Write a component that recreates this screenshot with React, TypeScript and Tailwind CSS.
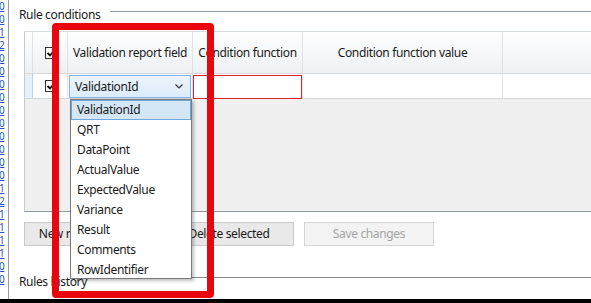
import React from "react";

const stripDigits = ["0", "0", "1", "2", "0", "0", "0", "0", "0", "0", "0", "0", "0", "0", "1", "2", "1", "1", "1", "1", "0", "0"];

const fields = [
  "ValidationId",
  "QRT",
  "DataPoint",
  "ActualValue",
  "ExpectedValue",
  "Variance",
  "Result",
  "Comments",
  "RowIdentifier",
];

function CheckBox() {
  return (
    <svg width="12" height="12" viewBox="0 0 12 12" className="block">
      <rect x="0.5" y="0.5" width="11" height="11" fill="#fff" stroke="#333" />
      <path d="M2.5 6 L5 8.5 L9.5 3" fill="none" stroke="#111" strokeWidth="1.8" />
    </svg>
  );
}

export default function App() {
  return (
    <div className="w-[591px] h-[303px] relative overflow-hidden bg-white flex flex-col text-[12px] tracking-[-0.35px] text-[#1a1a1a] font-['Segoe_UI','Noto_Sans',sans-serif]">
      <div className="flex flex-1 min-h-0">
        {/* clipped grid of the window behind */}
        <div className="w-[9px] border-r border-[#9a9a9a] overflow-hidden flex flex-col">
          {stripDigits.map((d, i) => (
            <span key={i} className="block h-[13px] leading-[12px] text-[10px] text-[#2455c3] underline -ml-[1px] overflow-hidden">
              {d}
            </span>
          ))}
        </div>

        <div className="flex-1 flex flex-col">
          {/* Rule conditions group header */}
          <div className="flex items-start pl-[10px] pt-[7px] h-[31px]">
            <span className="leading-[16px]">Rule conditions</span>
            <div className="flex-1 ml-[10px] mt-[4px] border-t border-[#8e9aa6]" />
          </div>

          {/* data grid */}
          <div className="ml-[15px] h-[181px] flex flex-col border-l border-t border-b border-l-[#c5cbd1] border-t-[#d8dde2] border-b-[#8d99a7] bg-[#f0f0f0]">
            <div className="flex h-[42px] bg-gradient-to-b from-white to-[#eef0f3] border-b border-[#d5d8db]">
              <div className="w-[8px] border-r border-[#dfe2e5]" />
              <div className="w-[35px] border-r border-[#dfe2e5] flex items-center justify-center pl-[1px]">
                <CheckBox />
              </div>
              <div className="w-[125px] border-r border-[#dfe2e5] flex items-center justify-center">Validation report field</div>
              <div className="w-[110px] border-r border-[#dfe2e5] flex items-center justify-center">Condition function</div>
              <div className="w-[200px] border-r border-[#dfe2e5] flex items-center justify-center">Condition function value</div>
              <div className="flex-1" />
            </div>
            <div className="flex h-[25px] bg-white border-b border-[#d5d8db]">
              <div className="w-[8px] border-r border-[#b9d3ea] bg-[#e6f0fa]" />
              <div className="w-[35px] border-r border-[#e4e4e4] flex items-center justify-center pl-[2px]">
                <CheckBox />
              </div>
              <div className="w-[125px] border-r border-[#e4e4e4] pl-[1px] pt-[1px]">
                <div className="w-[122px] h-[23px] border border-[#7eb4ea] bg-gradient-to-b from-[#ecf4fc] to-[#dcecfc] flex items-center justify-between pl-[5px] pr-[7px]">
                  <span>ValidationId</span>
                  <svg width="8" height="5" viewBox="0 0 8 5">
                    <path d="M0.5 0.5 L4 4 L7.5 0.5" fill="none" stroke="#333" strokeWidth="1.2" />
                  </svg>
                </div>
              </div>
              <div className="w-[110px] border-r border-[#e4e4e4] pt-[1px]">
                <div className="w-[109px] h-[24px] border border-[#e0202a] bg-white" />
              </div>
              <div className="w-[200px] border-r border-[#e4e4e4]" />
              <div className="flex-1" />
            </div>
          </div>

          {/* buttons */}
          <div className="flex gap-[10px] ml-[15px] mt-[10px]">
            <button className="w-[130px] h-[24px] border border-[#c9c9c9] bg-[#e9e9e9]">New rule condition</button>
            <button className="w-[130px] h-[24px] border border-[#c9c9c9] bg-[#e9e9e9]">Delete selected</button>
            <button className="w-[130px] h-[24px] border border-[#d6d6d6] bg-[#f3f3f3] text-[#a3a3a3]">Save changes</button>
          </div>

          {/* Rules history group header */}
          <div className="flex items-start pl-[10px] mt-[31px]">
            <span className="leading-[16px] mt-[-3px]">Rules history</span>
            <div className="flex-1 ml-[4px] border-t border-[#8a8a8a]" />
          </div>
        </div>
      </div>
      <div className="h-[4px] bg-black" />

      {/* open combo list */}
      <div className="absolute left-[70px] top-[99px] w-[122px] h-[180px] bg-white border border-[#7a7a7a] shadow-[2px_2px_3px_rgba(0,0,0,0.25)] flex flex-col">
        {fields.map((f, i) => (
          <div
            key={f}
            className={
              i === 0
                ? "h-[20px] leading-[18px] pl-[5px] bg-[#d3e7f7] border border-[#6fa9dc]"
                : "h-[20px] leading-[20px] pl-[6px]"
            }
          >
            {f}
          </div>
        ))}
      </div>

      {/* highlight frame */}
      <div className="absolute left-[52px] top-[23px] w-[162px] h-[275px] border-[7px] border-[#e8060f] rounded-[4px]" />
    </div>
  );
}
